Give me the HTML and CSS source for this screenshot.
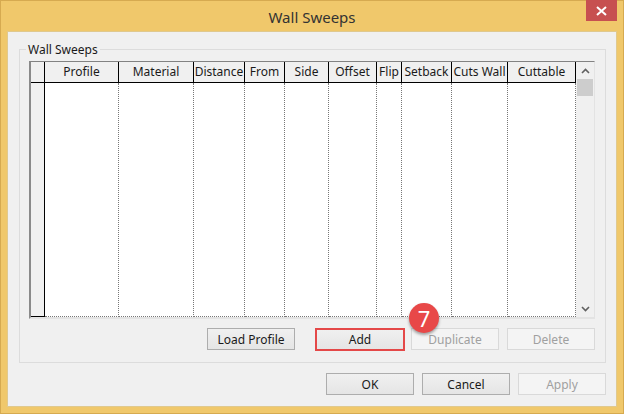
FILE: index.html
```html
<!DOCTYPE html>
<html lang="en">
<head>
    <meta charset="UTF-8">
    <meta name="viewport" content="width=device-width, initial-scale=1.0">
    <title>Wall Sweeps</title>
    <link rel="stylesheet" href="styles.css">
</head>
<body>
    <div class="window">
        <div class="titlebar">
            <span></span>
            <span class="title">Wall Sweeps</span>
            <button class="close" aria-label="Close">
                <svg width="11" height="10" viewBox="0 0 11 10"><path d="M1 1 L10 9 M10 1 L1 9" stroke="#fff" stroke-width="2"/></svg>
            </button>
        </div>

        <div class="client">
            <fieldset class="group">
                <legend>Wall Sweeps</legend>
                <div class="grid-wrap">
                    <div class="grid">
                        <div class="hcell"></div>
                        <div class="hcell">Profile</div>
                        <div class="hcell">Material</div>
                        <div class="hcell">Distance</div>
                        <div class="hcell">From</div>
                        <div class="hcell">Side</div>
                        <div class="hcell">Offset</div>
                        <div class="hcell">Flip</div>
                        <div class="hcell">Setback</div>
                        <div class="hcell">Cuts Wall</div>
                        <div class="hcell">Cuttable</div>

                        <div class="rowhead"></div>
                        <div class="cell"></div>
                        <div class="cell"></div>
                        <div class="cell"></div>
                        <div class="cell"></div>
                        <div class="cell"></div>
                        <div class="cell"></div>
                        <div class="cell"></div>
                        <div class="cell"></div>
                        <div class="cell"></div>
                        <div class="cell"></div>
                    </div>
                    <div class="scrollbar">
                        <div class="arrow">
                            <svg width="9" height="6" viewBox="0 0 9 6"><path d="M1 5 L4.5 1.5 L8 5" stroke="#606060" stroke-width="1.6" fill="none"/></svg>
                        </div>
                        <div class="thumb"></div>
                        <div class="track"></div>
                        <div class="arrow">
                            <svg width="9" height="6" viewBox="0 0 9 6"><path d="M1 1 L4.5 4.5 L8 1" stroke="#606060" stroke-width="1.6" fill="none"/></svg>
                        </div>
                    </div>
                </div>
                <div class="row-buttons">
                    <button class="btn load">Load Profile</button>
                    <button class="btn add">Add</button>
                    <button class="btn" disabled>Duplicate</button>
                    <button class="btn" disabled>Delete</button>
                </div>
            </fieldset>

            <div class="dialog-buttons">
                <button class="btn">OK</button>
                <button class="btn">Cancel</button>
                <button class="btn" disabled>Apply</button>
            </div>
        </div>

        <span class="badge">7</span>
    </div>
</body>
</html>
```

FILE: styles.css
```css
body {
    margin: 0;
    font-family: "Segoe UI", "Noto Sans", sans-serif;
    font-size: 12px;
    color: #1a1a1a;
}
.window {
    position: relative;
    width: 624px;
    height: 414px;
    box-sizing: border-box;
    border: 1px solid #d6aa50;
    background-color: #f0c86b;
    padding: 0 6px 6px;
    display: flex;
    flex-direction: column;
}
.titlebar {
    height: 30px;
    display: grid;
    grid-template-columns: 1fr auto 1fr;
    align-items: center;
}
.title {
    font-size: 15px;
    color: #333;
    padding-top: 1px;
}
.close {
    justify-self: end;
    align-self: start;
    margin-top: -1px;
    width: 31px;
    height: 21px;
    border: 0;
    padding: 0;
    background-color: #c75050;
    display: flex;
    align-items: center;
    justify-content: center;
}
.client {
    flex: 1;
    background-color: #f0f0f0;
    border: 1px solid #e0c98e;
    padding: 10px 10px 0 11px;
}
.group {
    margin: 0;
    min-width: 0;
    border: 1px solid #dcdcdc;
    padding: 4px 10px 11px 9px;
}
.group legend {
    padding: 0 2px;
    margin-left: -3px;
    line-height: 15px;
}
.grid-wrap {
    display: flex;
    border-top: 1px solid #828282;
    border-left: 2px solid #8a8a8a;
    border-right: 1px solid #e3e3e3;
    border-bottom: 2px solid #e3e3e3;
    height: 255px;
}
.grid {
    display: grid;
    grid-template-columns: 14px 74px 75px 51px 40px 44px 48px 25px 50px 56px 68px;
    grid-template-rows: 21px 1fr;
    background-color: #fff;
}
.hcell {
    background-color: #f0f0f0;
    border-right: 1px solid #000;
    border-bottom: 1px solid #000;
    text-align: center;
    line-height: 20px;
    white-space: nowrap;
    overflow: hidden;
}
.rowhead {
    background-color: #f0f0f0;
    border-right: 1px solid #000;
    border-bottom: 1px solid #000;
}
.cell {
    border-right: 1px dotted #777;
    border-bottom: 1px dotted #777;
}
.scrollbar {
    width: 18px;
    background-color: #f0f0f0;
    display: flex;
    flex-direction: column;
}
.arrow {
    height: 17px;
    display: flex;
    align-items: center;
    justify-content: center;
}
.thumb {
    height: 17px;
    margin: 0 1px;
    background-color: #cdcdcd;
}
.track {
    flex: 1;
}
.row-buttons {
    margin-top: 9px;
    display: flex;
    justify-content: flex-end;
    align-items: flex-start;
    gap: 8px;
}
.dialog-buttons {
    margin-top: 10px;
    display: flex;
    justify-content: flex-end;
    gap: 8px;
}
.btn {
    width: 88px;
    height: 22px;
    box-sizing: border-box;
    border: 1px solid #adadad;
    background: linear-gradient(#f0f0f0, #e5e5e5);
    font-family: inherit;
    font-size: 12px;
    color: #1a1a1a;
    padding: 0;
}
.btn:disabled {
    border-color: #d9d9d9;
    background: #f4f4f4;
    color: #a0a0a0;
}
.load {
    margin-right: 12px;
}
.add {
    width: 90px;
    height: 23px;
    border: 2px solid #e44848;
    margin-right: -2px;
}
.badge {
    position: absolute;
    left: 408px;
    top: 302px;
    width: 30px;
    height: 30px;
    border-radius: 50%;
    background-color: #e84848;
    box-shadow: 0 2px 3px rgba(0, 0, 0, 0.35);
    color: #fff;
    font-size: 22px;
    line-height: 30px;
    text-align: center;
}
```
